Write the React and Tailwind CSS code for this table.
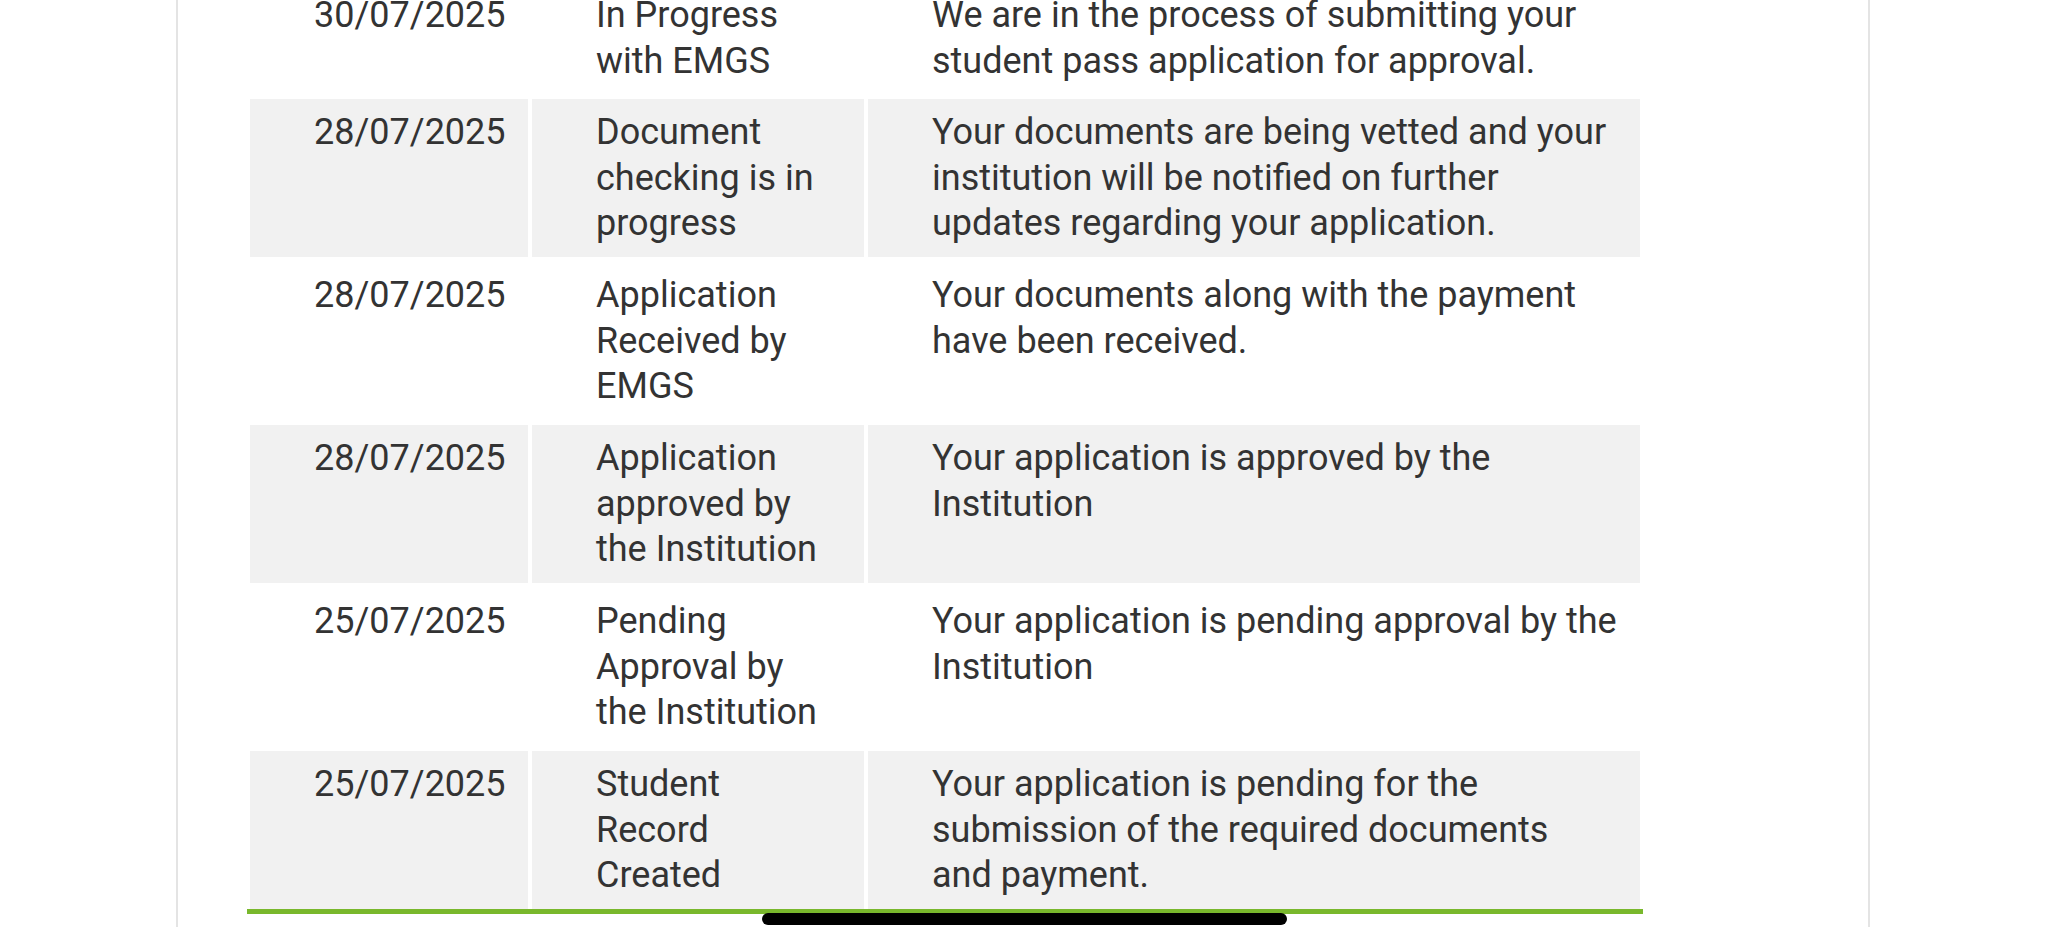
import React from "react";

const rows = [
  {
    date: "30/07/2025",
    status: ["In Progress", "with EMGS"],
    desc: ["We are in the process of submitting your", "student pass application for approval."],
    gray: false,
    first: true,
  },
  {
    date: "28/07/2025",
    status: ["Document", "checking is in", "progress"],
    desc: [
      "Your documents are being vetted and your",
      "institution will be notified on further",
      "updates regarding your application.",
    ],
    gray: true,
  },
  {
    date: "28/07/2025",
    status: ["Application", "Received by", "EMGS"],
    desc: ["Your documents along with the payment", "have been received."],
    gray: false,
  },
  {
    date: "28/07/2025",
    status: ["Application", "approved by", "the Institution"],
    desc: ["Your application is approved by the", "Institution"],
    gray: true,
  },
  {
    date: "25/07/2025",
    status: ["Pending", "Approval by", "the Institution"],
    desc: ["Your application is pending approval by the", "Institution"],
    gray: false,
  },
  {
    date: "25/07/2025",
    status: ["Student", "Record", "Created"],
    desc: [
      "Your application is pending for the",
      "submission of the required documents",
      "and payment.",
    ],
    gray: true,
  },
];

function Lines({ lines }) {
  return lines.map((l, i) => (
    <React.Fragment key={i}>
      {l}
      {i < lines.length - 1 && <br />}
    </React.Fragment>
  ));
}

export default function App() {
  return (
    <div className="relative w-[2048px] h-[945px] overflow-hidden bg-white text-[#333333] font-['Roboto',sans-serif]">
      <div className="ml-[176px] w-[1694px] h-full border-x-2 border-[#e4e4e4] pl-[69px]">
        <div className="-mt-[18px] w-[1396px]">
          <div className="flex flex-col gap-[5px] px-[3px]">
            {rows.map((r, i) => {
              const bg = r.gray ? "bg-[#f1f1f1]" : "bg-white";
              return (
                <div
                  key={i}
                  className={`grid grid-cols-[278px_332px_772px] gap-x-[4px] ${
                    r.first ? "h-[112px]" : "h-[158px]"
                  }`}
                >
                  <div className={`${bg} pl-16 pt-[11px] text-[36px] leading-[45.5px] whitespace-nowrap`}>
                    {r.date}
                  </div>
                  <div className={`${bg} pl-16 pt-[11px] text-[36px] leading-[45.5px] whitespace-nowrap`}>
                    <Lines lines={r.status} />
                  </div>
                  <div className={`${bg} pl-16 pt-[11px] text-[36px] leading-[45.5px] whitespace-nowrap`}>
                    <Lines lines={r.desc} />
                  </div>
                </div>
              );
            })}
          </div>
          <div className="h-[5px] bg-[#79b82c]" />
        </div>
      </div>
      <div className="absolute left-[762px] top-[913px] w-[525px] h-[12px] rounded-full bg-black" />
    </div>
  );
}
